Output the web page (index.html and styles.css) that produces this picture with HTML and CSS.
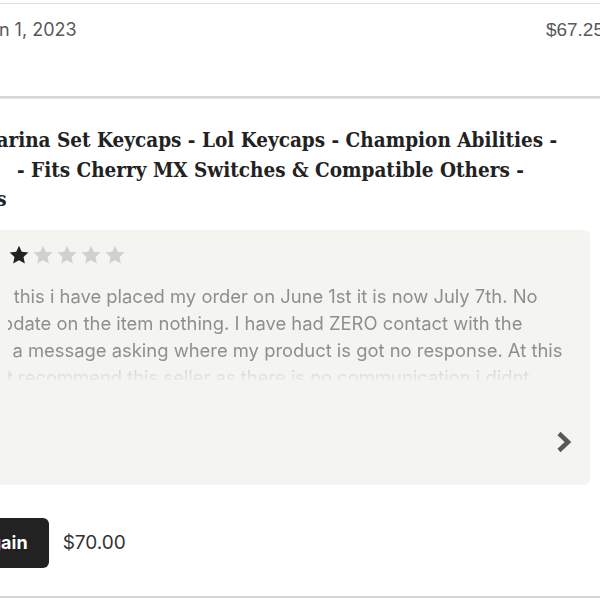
FILE: index.html
```html
<!DOCTYPE html>
<html lang="en">
<head>
<meta charset="utf-8">
<title>Purchases</title>
<link rel="stylesheet" href="styles.css">
</head>
<body>
<div class="page">
  <section class="card order">
    <span class="date">Jun 1, 2023</span>
    <span class="total">$67.25</span>
  </section>

  <section class="card item">
    <h2 class="title">
      <span class="tl tl1">Katarina Set Keycaps - Lol Keycaps - Champion Abilities -</span>
      <span class="tl tl2">- Fits Cherry MX Switches &amp; Compatible Others -</span>
      <span class="tl tl3">Gifts</span>
    </h2>

    <div class="review">
      <div class="stars" aria-label="1 out of 5 stars">
        <svg class="star on" viewBox="0 0 24 24"><path d="M12 1.8l3.05 6.6 7.2.8-5.35 4.9 1.5 7.1L12 17.6l-6.4 3.6 1.5-7.1-5.35-4.9 7.2-.8z"/></svg>
        <svg class="star" viewBox="0 0 24 24"><path d="M12 1.8l3.05 6.6 7.2.8-5.35 4.9 1.5 7.1L12 17.6l-6.4 3.6 1.5-7.1-5.35-4.9 7.2-.8z"/></svg>
        <svg class="star" viewBox="0 0 24 24"><path d="M12 1.8l3.05 6.6 7.2.8-5.35 4.9 1.5 7.1L12 17.6l-6.4 3.6 1.5-7.1-5.35-4.9 7.2-.8z"/></svg>
        <svg class="star" viewBox="0 0 24 24"><path d="M12 1.8l3.05 6.6 7.2.8-5.35 4.9 1.5 7.1L12 17.6l-6.4 3.6 1.5-7.1-5.35-4.9 7.2-.8z"/></svg>
        <svg class="star" viewBox="0 0 24 24"><path d="M12 1.8l3.05 6.6 7.2.8-5.35 4.9 1.5 7.1L12 17.6l-6.4 3.6 1.5-7.1-5.35-4.9 7.2-.8z"/></svg>
      </div>
      <p class="review-text">
        <span class="rl rl1">about this i have placed my order on June 1st it is now July 7th. No</span>
        <span class="rl rl2">update on the item nothing. I have had ZERO contact with the</span>
        <span class="rl rl3">sent a message asking where my product is got no response. At this</span>
        <span class="rl rl4">not recommend this seller as there is no communication i didnt</span>
      </p>
      <div class="review-foot">
        <svg class="chevron" viewBox="0 0 16 22"><polyline points="3,2.5 12,11 3,19.5"/></svg>
      </div>
    </div>

    <div class="actions">
      <button class="btn">Buy this again</button>
      <span class="price">$70.00</span>
    </div>
  </section>
</div>
</body>
</html>
```

FILE: styles.css
```css
* { box-sizing: border-box; }

html, body { margin: 0; padding: 0; }

body {
  width: 600px;
  height: 600px;
  overflow: hidden;
  background: #fff;
  font-family: Inter, "Noto Sans", "Liberation Sans", sans-serif;
}

.page { padding-top: 3px; }

.card {
  background: #fff;
  border-top: 1px solid #dedede;
}

.order {
  height: 95px;
  border-bottom: 2px solid #d6d6d6;
  padding-top: 14px;
  display: flex;
  justify-content: space-between;
  align-items: flex-start;
}

.date {
  margin-left: -22px;
  font-size: 18px;
  line-height: 24px;
  color: #595959;
}

.total {
  margin-right: -4px;
  font-family: "Liberation Sans", Arial, sans-serif;
  font-size: 19px;
  line-height: 24px;
  color: #595959;
}

.item {
  height: 500px;
  border-top-color: #e6e6e6;
  border-bottom: 2px solid #d6d6d6;
  padding-top: 27px;
}

.title {
  margin: 0;
  font-family: "DejaVu Serif Condensed", "DejaVu Serif", serif;
  font-stretch: semi-condensed;
  font-weight: bold;
  font-size: 20.5px;
  line-height: 29.5px;
  color: #222;
}

.tl { display: block; white-space: nowrap; }
.tl1 { margin-left: -40px; }
.tl2 { margin-left: 17px; }
.tl3 { margin-left: -43px; }

.review {
  margin-top: 15px;
  margin-left: -40px;
  width: 630px;
  height: 255px;
  border-radius: 6px;
  background: #f4f4f1;
  padding: 14px 18px 32px 48px;
  display: flex;
  flex-direction: column;
}

.stars { display: flex; gap: 2px; height: 22px; align-items: center; }
.star { width: 22px; height: 22px; fill: #d0d0d0; }
.star.on { fill: #222; }

.review-text {
  margin: 17px 0 0;
  height: 97px;
  overflow: hidden;
  font-size: 18.4px;
  line-height: 27px;
  color: #8f8f8f;
  -webkit-mask-image: linear-gradient(to bottom, #000 0, #000 80px, rgba(0,0,0,0.28) 88px, rgba(0,0,0,0.1) 97px);
  mask-image: linear-gradient(to bottom, #000 0, #000 80px, rgba(0,0,0,0.28) 88px, rgba(0,0,0,0.1) 97px);
}

.rl { display: block; white-space: nowrap; }
.rl1 { margin-left: -49px; }
.rl2 { margin-left: -17px; }
.rl3 { margin-left: -38px; }
.rl4 { margin-left: -23px; }

.review-foot {
  margin-top: auto;
  display: flex;
  justify-content: flex-end;
}

.chevron {
  width: 16px;
  height: 22px;
  fill: none;
  stroke: #595959;
  stroke-width: 4.5;
  stroke-linejoin: miter;
}

.actions {
  margin-top: 33px;
  display: flex;
  align-items: center;
  gap: 14px;
}

.btn {
  margin-left: -117px;
  height: 50px;
  padding: 0 21px;
  border: 0;
  border-radius: 6px;
  background: #222;
  color: #fff;
  font-family: Inter, "Noto Sans", sans-serif;
  font-weight: 700;
  font-size: 18px;
}

.price {
  font-size: 19px;
  color: #333;
}
```
